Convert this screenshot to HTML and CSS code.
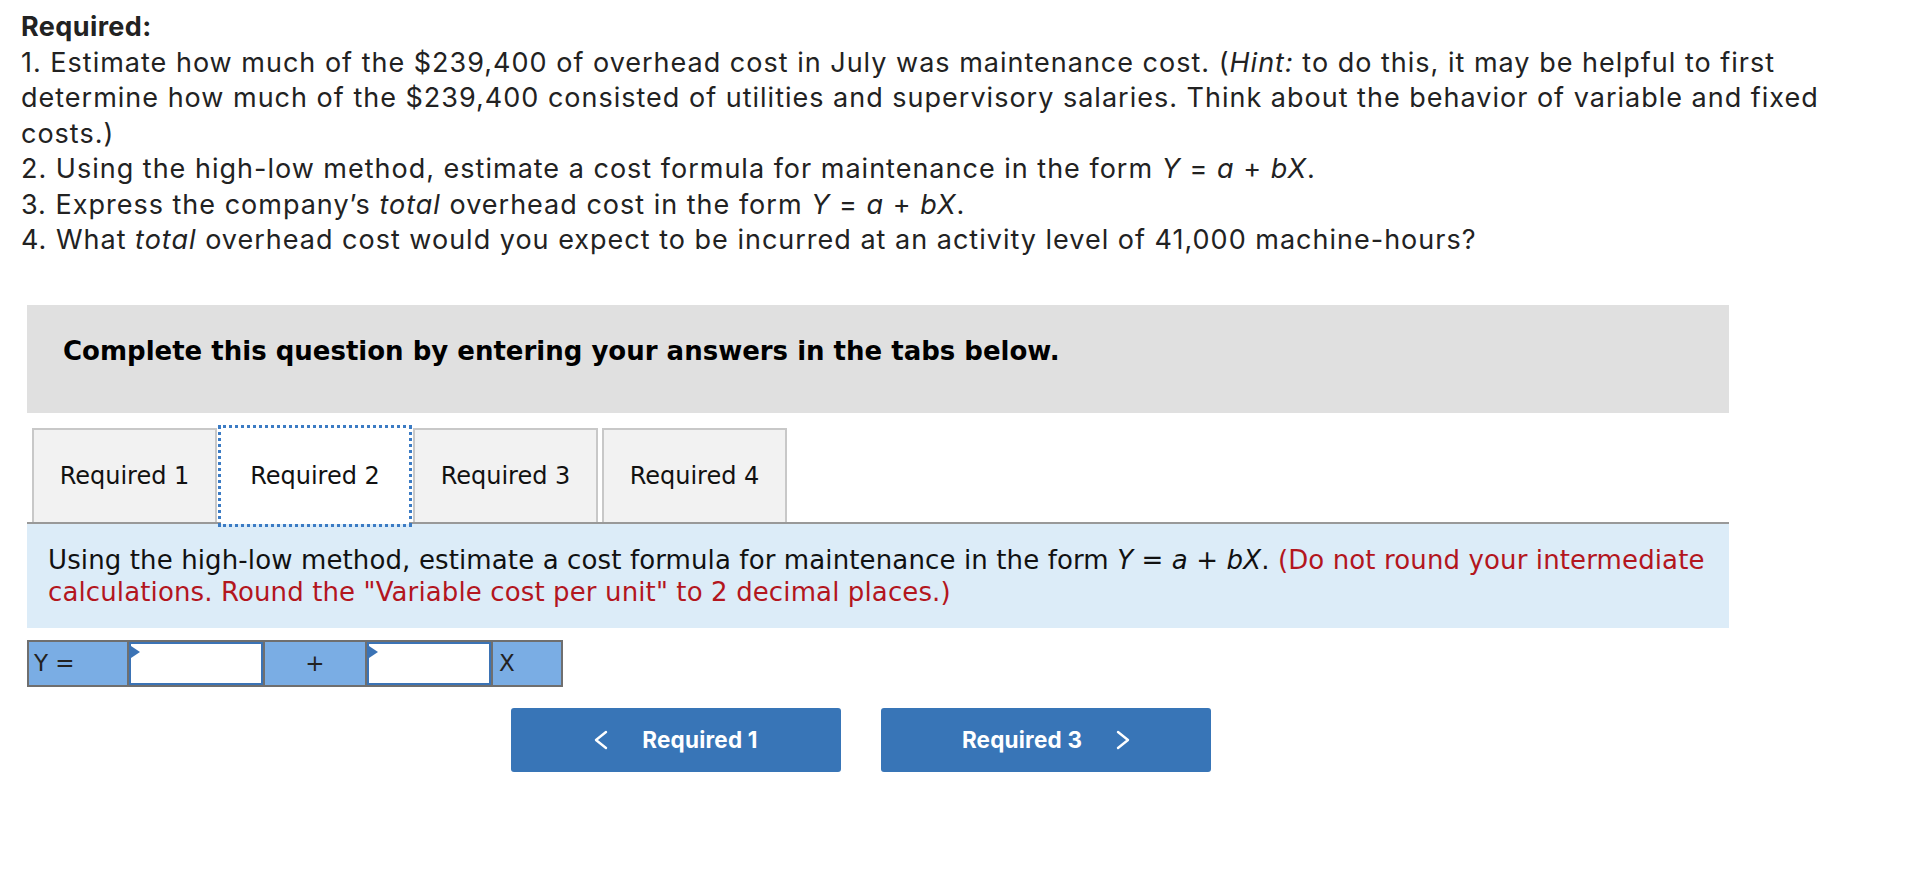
FILE: index.html
```html
<!DOCTYPE html>
<html lang="en">
<head>
<meta charset="utf-8">
<title>Required</title>
<link rel="stylesheet" href="styles.css">
</head>
<body>
<div class="page">
  <div class="question">
    <p class="req-title">Required:</p>
    <p>1. Estimate how much of the $239,400 of overhead cost in July was maintenance cost. (<i>Hint:</i> to do this, it may be helpful to first determine how much of the $239,400 consisted of utilities and supervisory salaries. Think about the behavior of variable and fixed costs.)</p>
    <p>2. Using the high-low method, estimate a cost formula for maintenance in the form <i>Y</i> = <i>a</i> + <i>bX</i>.</p>
    <p>3. Express the company’s <i>total</i> overhead cost in the form <i>Y</i> = <i>a</i> + <i>bX</i>.</p>
    <p>4. What <i>total</i> overhead cost would you expect to be incurred at an activity level of 41,000 machine-hours?</p>
  </div>

  <div class="panel">
    <div class="instructions">Complete this question by entering your answers in the tabs below.</div>

    <div class="tabs">
      <div class="tab">Required 1</div>
      <div class="tab active">Required 2</div>
      <div class="tab">Required 3</div>
      <div class="tab">Required 4</div>
    </div>

    <div class="prompt">Using the high-low method, estimate a cost formula for maintenance in the form <i>Y</i> = <i>a</i> + <i>bX</i>. <span class="note">(Do not round your intermediate calculations. Round the "Variable cost per unit" to 2 decimal places.)</span></div>

    <div class="formula">
      <div class="cell label">Y =</div>
      <div class="cell input wide"><span class="flag"></span></div>
      <div class="cell op">+</div>
      <div class="cell input"><span class="flag"></span></div>
      <div class="cell var">X</div>
    </div>

    <div class="nav">
      <div class="btn">
        <svg class="chev" width="14" height="22" viewBox="0 0 14 22"><polyline points="12,3 2,11 12,19" fill="none" stroke="#fff" stroke-width="2.4" stroke-linecap="round" stroke-linejoin="round"/></svg>
        <span>Required 1</span>
      </div>
      <div class="btn">
        <span>Required 3</span>
        <svg class="chev" width="14" height="22" viewBox="0 0 14 22"><polyline points="2,3 12,11 2,19" fill="none" stroke="#fff" stroke-width="2.4" stroke-linecap="round" stroke-linejoin="round"/></svg>
      </div>
    </div>
  </div>
</div>
</body>
</html>
```

FILE: styles.css
```css
html, body {
  margin: 0;
  padding: 0;
  background: #fff;
}

.page {
  padding: 9px 0 0 21px;
}

.question {
  width: 1875px;
  font-family: Inter, "Open Sans", sans-serif;
  font-size: 27px;
  letter-spacing: 1px;
  line-height: 35.5px;
  color: #222;
  font-variant-ligatures: none;
}

.question p {
  margin: 0;
}

.question .req-title {
  font-weight: 700;
  letter-spacing: 0.4px;
}

.panel {
  margin: 47px 0 0 6px;
  width: 1702px;
  font-family: "DejaVu Sans", Verdana, sans-serif;
  font-size: 26px;
  color: #111;
}

.instructions {
  background: #e0e0e0;
  height: 108px;
  box-sizing: border-box;
  padding: 30px 36px 0;
  line-height: 32px;
  font-weight: 700;
  color: #000;
}

.tabs {
  display: flex;
  gap: 4px;
  margin-top: 15px;
  padding-left: 5px;
  border-bottom: 2px solid #999;
  height: 94px;
}

.tab {
  width: 185px;
  height: 94px;
  box-sizing: border-box;
  border: 2px solid #c8c8c8;
  border-bottom: none;
  background: #f2f2f2;
  text-align: center;
  font-size: 24px;
  line-height: 30px;
  padding-top: 31px;
  color: #111;
}

.tab.active {
  width: 188px;
  height: 96px;
  margin-bottom: -2px;
  border: none;
  background: #fff;
  outline: 3px dotted #3b7bc4;
  padding-top: 33px;
}

.prompt {
  background: #dcecf8;
  padding: 20px 8px 20px 21px;
  line-height: 32px;
  letter-spacing: 0.12px;
  color: #111;
}

.prompt .note {
  color: #b3161e;
}

.formula {
  display: inline-flex;
  margin-top: 12px;
  border: 2px solid #6f6f6f;
  background: #6f6f6f;
  gap: 2px;
  height: 47px;
  box-sizing: border-box;
  vertical-align: top;
  font-size: 23px;
}

.cell {
  background: #7aade4;
  height: 43px;
  box-sizing: border-box;
  display: flex;
  align-items: center;
  color: #222;
}

.cell.label {
  width: 98px;
  padding-left: 5px;
}

.cell.op {
  width: 100px;
  justify-content: center;
}

.cell.var {
  width: 68px;
  padding-left: 6px;
}

.cell.input {
  width: 124px;
  background: #fff;
  border: 2px solid #3b73b5;
  position: relative;
}

.cell.input.wide {
  width: 134px;
}

.flag {
  position: absolute;
  top: 2px;
  left: 0;
  width: 0;
  height: 0;
  border-left: 9px solid #3b73b5;
  border-top: 6px solid transparent;
  border-bottom: 6px solid transparent;
}

.nav {
  display: flex;
  gap: 40px;
  margin: 21px 0 0 484px;
}

.btn {
  width: 330px;
  height: 64px;
  background: #3875b7;
  border-radius: 3px;
  display: flex;
  align-items: center;
  justify-content: center;
  gap: 34px;
  color: #fff;
  font-family: Inter, "Open Sans", sans-serif;
  font-weight: 700;
  font-size: 22.5px;
  letter-spacing: 0.2px;
}

.chev {
  display: block;
}
```
